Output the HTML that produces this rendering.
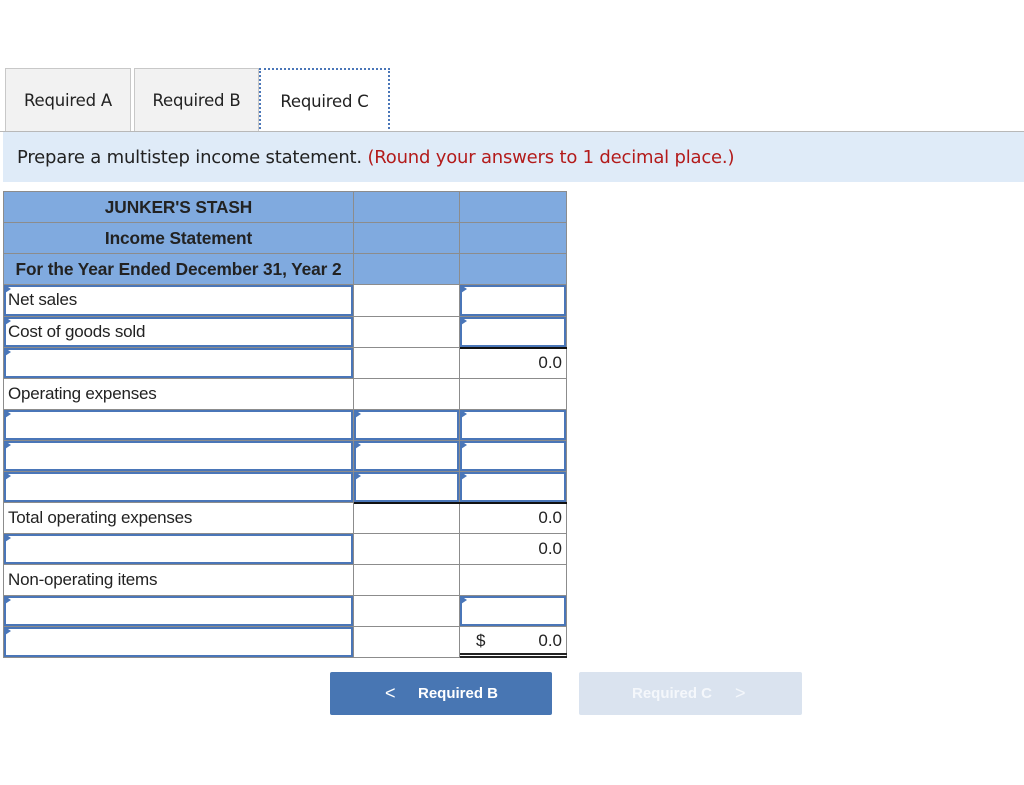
<!DOCTYPE html>
<html><head><meta charset="utf-8"><style>
body{margin:0;width:1024px;height:785px;background:#fff;position:relative;overflow:hidden;font-family:"Liberation Sans",Arial,sans-serif;}
.a{position:absolute;box-sizing:border-box;}
.tab{position:absolute;top:68px;height:64px;background:#f2f2f2;border:1px solid #c8c8c8;border-bottom:none;font-family:"DejaVu Sans","Liberation Sans",sans-serif;font-size:16.5px;color:#222;line-height:64px;text-align:center;box-sizing:border-box;letter-spacing:-0.2px}
.g{position:absolute;box-sizing:border-box;border:1px solid #8c8c8c;font-size:17px;color:#222;}
.h{background:#80aadf;font-weight:bold;text-align:center;line-height:30px;font-size:17.3px;letter-spacing:-0.1px}
.in{position:absolute;box-sizing:border-box;border:2px solid #4a76b8;background:#fff;}
.in:before{content:"";position:absolute;left:-1px;top:-2px;border-left:6px solid #4a76b8;border-top:4px solid transparent;border-bottom:4px solid transparent;height:0;width:0}
.t{position:absolute;left:6px;top:0;line-height:28px;font-size:17px;color:#222;letter-spacing:-0.2px}
.n{position:absolute;right:4px;line-height:30px;font-size:17px;color:#222}
</style></head><body>
<div class="tab" style="left:5px;width:126px">Required A</div>
<div class="tab" style="left:134px;width:125px">Required B</div>
<div class="tab" style="left:259px;width:131px;background:#fff;border:2px dotted #4a76b8;height:65px;">Required C</div>
<div class="a" style="left:0;top:131px;width:1024px;height:1px;background:#b8b8b8"></div>
<div class="a" style="left:3px;top:132px;width:1021px;height:50px;background:#dfebf8;font-family:'DejaVu Sans','Liberation Sans',sans-serif;font-size:18px;line-height:52px;padding-left:14px;color:#222;letter-spacing:-0.2px">Prepare a multistep income statement. <span style="color:#b31b1b">(Round your answers to 1 decimal place.)</span></div>

<div class="g h" style="left:3px;top:191px;width:351px;height:32px">JUNKER'S STASH</div>
<div class="g h" style="left:353px;top:191px;width:107px;height:32px"></div>
<div class="g h" style="left:459px;top:191px;width:108px;height:32px"></div>
<div class="g h" style="left:3px;top:222px;width:351px;height:32px">Income Statement</div>
<div class="g h" style="left:353px;top:222px;width:107px;height:32px"></div>
<div class="g h" style="left:459px;top:222px;width:108px;height:32px"></div>
<div class="g h" style="left:3px;top:253px;width:351px;height:32px">For the Year Ended December 31, Year 2</div>
<div class="g h" style="left:353px;top:253px;width:107px;height:32px"></div>
<div class="g h" style="left:459px;top:253px;width:108px;height:32px"></div>

<div id="rows"></div>
<script>
var rows=[[284,316,'iPi','Net sales'],[316,347,'iPi','Cost of goods sold'],[347,378,'iPP','',''],[378,409,'PPP','Operating expenses'],[409,440,'iii'],[440,471,'iii'],[471,502,'iii'],[502,533,'PPP','Total operating expenses','0.0'],[533,564,'iPP','','0.0'],[564,595,'PPP','Non-operating items'],[595,626,'iPi'],[626,657,'iPP','','$']];
var cols=[[3,354],[353,460],[459,567]];
var h='';
rows.forEach(function(r,ri){
 for(var c=0;c<3;c++){
  var x=cols[c][0],w=cols[c][1]-cols[c][0],y=r[0],hh=r[1]-r[0]+1;
  h+='<div class="g" style="left:'+x+'px;top:'+y+'px;width:'+w+'px;height:'+hh+'px"></div>';
  if(r[2][c]=='i'){h+='<div class="in" style="left:'+(x+1)+'px;top:'+(y+1)+'px;width:'+(w-2)+'px;height:'+(hh-2)+'px"></div>';}
  if(c==0&&r[3])h+='<div class="t" style="left:'+(x+5)+'px;top:'+(y+2)+'px">'+r[3]+'</div>';
 }
});
document.getElementById('rows').innerHTML=h;
</script>
<div class="a" style="left:460px;top:347px;width:107px;height:2px;background:#111"></div>
<div class="a" style="left:354px;top:502px;width:213px;height:2px;background:#111"></div>
<div class="n" style="left:500px;right:auto;width:62px;text-align:right;top:348px">0.0</div>
<div class="n" style="left:500px;right:auto;width:62px;text-align:right;top:503px">0.0</div>
<div class="n" style="left:500px;right:auto;width:62px;text-align:right;top:534px">0.0</div>
<div class="n" style="left:476px;top:626px">$</div>
<div class="n" style="left:500px;right:auto;width:62px;text-align:right;top:626px">0.0</div>
<div class="a" style="left:460px;top:653px;width:107px;height:5px;border-top:2px solid #222;border-bottom:2px solid #222"></div>

<div class="a" style="left:330px;top:672px;width:222px;height:43px;background:#4876b3;border-radius:2px;color:#fff;font-weight:bold;font-size:15px;line-height:43px"><span style="position:absolute;left:55px;font-weight:normal;font-size:18px">&lt;</span><span style="position:absolute;left:88px">Required B</span></div>
<div class="a" style="left:579px;top:672px;width:223px;height:43px;background:#dae3ef;border-radius:2px;color:#f4f7fb;font-weight:bold;font-size:15px;line-height:43px"><span style="position:absolute;left:53px">Required C</span><span style="position:absolute;left:156px;font-weight:normal;font-size:18px">&gt;</span></div>
</body></html>
